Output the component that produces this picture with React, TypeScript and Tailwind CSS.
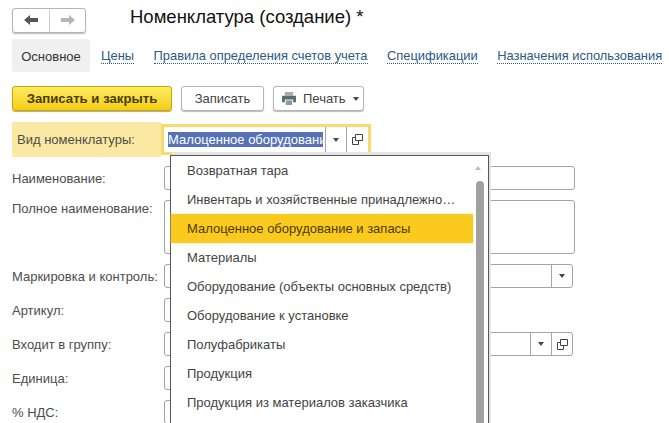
const tabs = ["Цены", "Правила определения счетов учета", "Спецификации", "Назначения использования"];

const items = [
  "Возвратная тара",
  "Инвентарь и хозяйственные принадлежно…",
  "Малоценное оборудование и запасы",
  "Материалы",
  "Оборудование (объекты основных средств)",
  "Оборудование к установке",
  "Полуфабрикаты",
  "Продукция",
  "Продукция из материалов заказчика",
];

function Caret() {
  return <span className="block w-0 h-0 border-x-[3.5px] border-x-transparent border-t-[4px] border-t-[#444]" />;
}

function OpenIcon() {
  return (
    <svg width="11" height="11" viewBox="0 0 11 11" fill="none" stroke="#444" strokeWidth="1">
      <path d="M3.5 .5h7v6h-7z" />
      <path d="M3.5 3.5h-3v7h6v-4" />
    </svg>
  );
}

function Arrow({ dir, color }: { dir: "left" | "right"; color: string }) {
  return (
    <svg width="14" height="10" viewBox="0 0 14 10" fill={color}>
      {dir === "left" ? <path d="M0 5 6 0v3h8v4H6v3z" /> : <path d="M14 5 8 0v3H0v4h8v3z" />}
    </svg>
  );
}

function Cell({ children }: { children: React.ReactNode }) {
  return <div className="w-[21px] h-full border-l border-[#a5a5a5] flex items-center justify-center shrink-0">{children}</div>;
}

function Row({ label, h = "h-[24px]", mt = "mt-[10px]", w = "w-[411px]", pt = "pt-[4px]", cells }: { label: string; h?: string; mt?: string; w?: string; pt?: string; cells?: React.ReactNode }) {
  return (
    <div className={`flex ${mt}`}>
      <div className={`w-[152px] ${pt} leading-[18px] text-[#4d4d4d] whitespace-nowrap`}>{label}</div>
      <div className={`${w} ${h} border border-[#a5a5a5] rounded-[3px] flex justify-end bg-white`}>{cells}</div>
    </div>
  );
}

export default function App() {
  return (
    <div className="relative w-[669px] h-[423px] overflow-hidden bg-white text-[13px] text-[#333] font-['Liberation_Sans',Arial,sans-serif]">
      {/* шапка */}
      <div className="flex items-center pt-[4px] pl-[12px] h-[36px]">
        <div className="flex w-[74px] h-[25px] border border-[#b5b5b5] rounded-[3px] shadow-[0_1px_1px_#bbb]">
          <div className="w-[37px] flex items-center justify-center border-r border-[#d0d0d0]">
            <Arrow dir="left" color="#555" />
          </div>
          <div className="flex-1 flex items-center justify-center">
            <Arrow dir="right" color="#b5b5b5" />
          </div>
        </div>
        <div className="ml-[44px] mb-[7px] text-[18.5px] text-[#111]">Номенклатура (создание) *</div>
      </div>

      {/* вкладки */}
      <div className="flex items-center pl-[12px] mt-[3px] h-[33px]">
        <div className="w-[78px] h-full pt-[2px] bg-[#f0f0f0] rounded-[2px] flex items-center justify-center text-[#333]">Основное</div>
        <div className="flex ml-[11px] mt-[2px] gap-[19.5px] text-[12.9px] text-[#2a5a85]">
          {tabs.map((t) => (
            <span key={t} className="border-b border-dotted border-[#2a5a85] leading-[14px] whitespace-nowrap">{t}</span>
          ))}
        </div>
      </div>

      {/* командная панель */}
      <div className="flex items-center pl-[12px] mt-[14px] h-[25px]">
        <button className="w-[160px] h-full rounded-[3px] border border-[#c9a900] bg-gradient-to-b from-[#fdeb5f] to-[#f5cd00] font-bold text-[13.2px] text-[#4a3c00] shadow-[0_1px_1px_#aaa]">
          Записать и закрыть
        </button>
        <button className="ml-[9px] w-[83px] h-full rounded-[3px] border border-[#b5b5b5] bg-white text-[#444] shadow-[0_1px_1px_#bbb]">Записать</button>
        <button className="ml-[9px] w-[91px] h-full pl-[8px] rounded-[3px] border border-[#b5b5b5] bg-white text-[#444] shadow-[0_1px_1px_#bbb] flex items-center gap-[7px]">
          <svg width="14" height="13" viewBox="0 0 15 14">
            <path d="M3 0h9v4H3z" fill="#aaa" />
            <path d="M0 4h15v7h-3V8H3v3H0z" fill="#5b6b70" />
            <path d="M4 9h7v5H4z" fill="#8b9a9e" />
          </svg>
          Печать
          <Caret />
        </button>
      </div>

      {/* вид номенклатуры */}
      <div className="flex items-center w-fit ml-[12px] mt-[11px] h-[35px]">
        <div className="w-[149px] h-full flex items-center pl-[5px] bg-[#fbe9a3] text-[#4d4d4d]">Вид номенклатуры:</div>
        <div className="w-[210px] h-[31px] border-[3px] border-[#f8dc6b] bg-white flex items-center">
          <div className="w-[161px] pl-[4px] overflow-hidden whitespace-nowrap">
            <span className="bg-[#5671b5] text-white block w-[155px] overflow-hidden leading-[15px]">Малоценное оборудование и запасы</span>
          </div>
          <Cell><Caret /></Cell>
          <Cell><OpenIcon /></Cell>
        </div>
      </div>

      {/* реквизиты */}
      <div className="pl-[12px]">
        <Row label="Наименование:" mt="mt-[9px]" />
        <Row label="Полное наименование:" h="h-[54px]" pt="pt-[0px]" />
        <Row label="Маркировка и контроль:" w="w-[409px]" cells={<Cell><Caret /></Cell>} />
        <Row label="Артикул:" w="w-[300px]" />
        <Row label="Входит в группу:" w="w-[409px]" cells={<><Cell><Caret /></Cell><Cell><OpenIcon /></Cell></>} />
        <Row label="Единица:" w="w-[300px]" />
        <Row label="% НДС:" w="w-[300px]" />
      </div>

      {/* выпадающий список */}
      <div className="absolute left-[170px] top-[155px] w-[319px] h-[290px] bg-white border border-[#555] shadow-[2px_-3px_0_0_#e4e4e4] text-[#444]">
        <div className="absolute top-[10px] right-[7px] w-0 h-0 border-x-[3.5px] border-x-transparent border-b-[4px] border-b-[#bbb]" />
        <div className="absolute top-[25px] right-[4px] w-[8px] h-[270px] rounded-t-[4px] bg-[#a0a0a0]" />
        <div className="w-[302px]">
          {items.map((item, i) => (
            <div
              key={item}
              className={`h-[29px] pl-[16px] pt-[5px] whitespace-nowrap ${i === 2 ? "bg-[#fbca1f] text-[#4a3c00] shadow-[0_0_2px_#fbe9a3]" : ""}`}
            >
              {item}
            </div>
          ))}
        </div>
      </div>
    </div>
  );
}
